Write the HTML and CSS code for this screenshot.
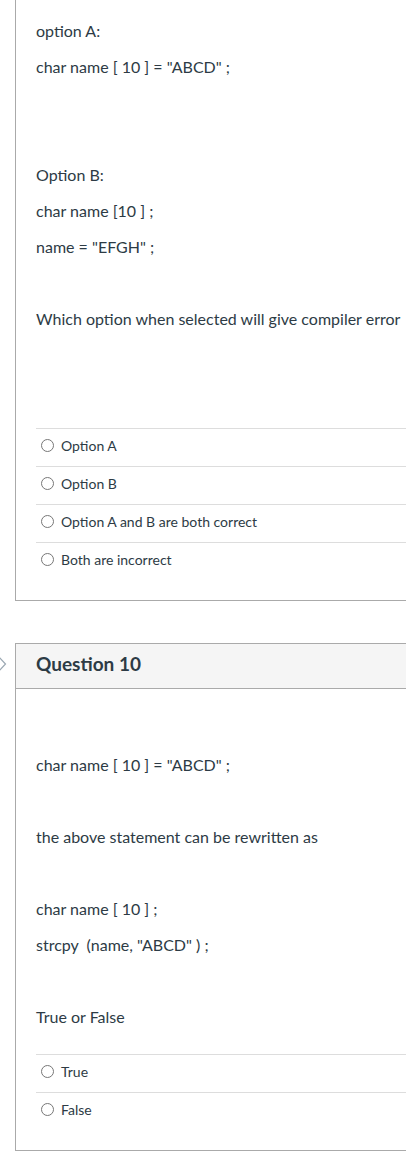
FILE: index.html
```html
<!DOCTYPE html>
<html>
<head>
<meta charset="utf-8">
<link rel="stylesheet" href="styles.css">
</head>
<body>
<div class="quiz">
  <div class="card card--first">
    <div class="q-text">
      <p>option A:</p>
      <p>char name [ 10 ] = "ABCD" ;</p>
      <p>&nbsp;</p>
      <p>&nbsp;</p>
      <p>Option B:</p>
      <p>char name [10 ] ;</p>
      <p>name = "EFGH" ;</p>
      <p>&nbsp;</p>
      <p>Which option when selected will give compiler error</p>
      <p>&nbsp;</p>
      <p>&nbsp;</p>
    </div>
    <div class="answers">
      <label class="answer"><span class="radio"></span><span>Option A</span></label>
      <label class="answer"><span class="radio"></span><span>Option B</span></label>
      <label class="answer"><span class="radio"></span><span>Option A and B are both correct</span></label>
      <label class="answer"><span class="radio"></span><span>Both are incorrect</span></label>
    </div>
  </div>

  <div class="card">
    <svg class="flag" width="8" height="16" viewBox="0 0 8 16"><path d="M0.5 1.5 L6.5 8 L0.5 14.5" fill="none" stroke="#9aa7b2" stroke-width="1.2"/></svg>
    <div class="header"><h2>Question 10</h2></div>
    <div class="q-text">
      <p>&nbsp;</p>
      <p>char name [ 10 ] = "ABCD" ;</p>
      <p>&nbsp;</p>
      <p>the above statement can be rewritten as</p>
      <p>&nbsp;</p>
      <p>char name [ 10 ] ;</p>
      <p>strcpy&nbsp; (name, "ABCD" ) ;</p>
      <p>&nbsp;</p>
      <p>True or False</p>
    </div>
    <div class="answers">
      <label class="answer"><span class="radio"></span><span>True</span></label>
      <label class="answer"><span class="radio"></span><span>False</span></label>
    </div>
  </div>
</div>
</body>
</html>
```

FILE: styles.css
```css
html, body {
  margin: 0;
  padding: 0;
  overflow: hidden;
  background: #ffffff;
}

body {
  font-family: Lato, "Open Sans", "Liberation Sans", sans-serif;
  color: #2d3b45;
}

.quiz {
  padding-left: 15px;
  width: 460px;
}

.card {
  position: relative;
  border: 1px solid #aaaaaa;
  background: #ffffff;
  margin-bottom: 42px;
}

.card--first {
  margin-top: -10px;
}

.flag {
  position: absolute;
  left: -17px;
  top: 12px;
}

.header {
  background: #f5f5f5;
  border-bottom: 1px solid #aaaaaa;
  height: 44px;
  display: flex;
  align-items: center;
  padding: 0 20px;
}

.header h2 {
  margin: 0 0 5px;
  font-size: 19px;
  font-weight: 700;
  color: #2d3b45;
}

.q-text {
  padding: 16px 20px 13px;
  font-size: 16px;
  line-height: 24px;
}

.q-text p {
  margin: 12px 0;
  white-space: nowrap;
}

.answers {
  padding: 0 0 20px 20px;
}

.answer {
  display: flex;
  align-items: center;
  gap: 7px;
  height: 32px;
  padding-bottom: 5px;
  border-top: 1px solid #dddddd;
  padding-left: 5px;
  font-size: 14px;
  color: #2d3b45;
}

.radio {
  width: 11px;
  height: 11px;
  border: 1px solid #777777;
  border-radius: 50%;
  flex: none;
  box-sizing: content-box;
  margin-top: 1px;
}
```
